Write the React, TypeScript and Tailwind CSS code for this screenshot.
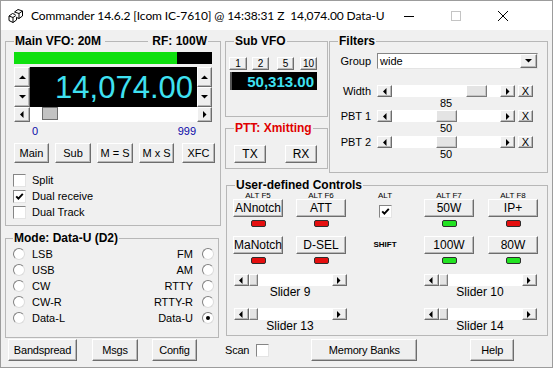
import React from 'react';

type Kids = { children?: React.ReactNode; className?: string };

const raised =
  'bg-[#efefef] border border-t-white border-l-white border-r-[#6d6d6d] border-b-[#6d6d6d] shadow-[inset_-1px_-1px_0_#b8b8b8]';
const sunken = 'bg-white border border-t-[#858585] border-l-[#858585] border-r-[#e4e4e4] border-b-[#e4e4e4]';

function Btn({ children, className = '' }: Kids) {
  return <div className={`${raised} flex items-center justify-center leading-none ${className}`}>{children}</div>;
}

function Tri({ dir }: { dir: 'u' | 'd' | 'l' | 'r' }) {
  const vertical = dir === 'u' || dir === 'd';
  const pts = { u: '0,4 3.5,0.5 7,4', d: '0,0 3.5,3.5 7,0', l: '3.5,0 0,3.5 3.5,7', r: '0,0 3.5,3.5 0,7' }[dir];
  return (
    <svg width={vertical ? 7 : 4} height={vertical ? 4 : 7} viewBox={vertical ? '0 0 7 4' : '0 0 4 7'}>
      <polygon points={pts} fill="#000" />
    </svg>
  );
}

function ArrowBtn({ dir, className = '' }: { dir: 'u' | 'd' | 'l' | 'r'; className?: string }) {
  return (
    <div className={`${raised} flex items-center justify-center shrink-0 ${className}`}>
      <Tri dir={dir} />
    </div>
  );
}

function Scroll({ value, thumb, className = '' }: { value: number; thumb: number; className?: string }) {
  // value 0..1 sets where the thumb sits in the track
  return (
    <div className={`flex h-[12px] ${className}`}>
      <ArrowBtn dir="l" className="w-[15px] h-full" />
      <div className="flex-1 bg-white flex">
        <div style={{ flexGrow: value }} />
        <div
          className="h-full shrink-0 bg-[#e4e4e4] border border-t-white border-l-white border-r-[#7a7a7a] border-b-[#7a7a7a] shadow-[inset_-1px_-1px_0_#c4c4c4]"
          style={{ width: thumb }}
        />
        <div style={{ flexGrow: 1 - value }} />
      </div>
      <ArrowBtn dir="r" className="w-[15px] h-full" />
    </div>
  );
}

function Check({ checked = false, className = '' }: { checked?: boolean; className?: string }) {
  return (
    <div className={`w-[13px] h-[13px] ${sunken} flex items-center justify-center shrink-0 ${className}`}>
      {checked && (
        <svg width="9" height="9" viewBox="0 0 9 9">
          <polyline points="1.2,4.3 3.4,6.6 7.8,1.8" fill="none" stroke="#000" strokeWidth="1.9" />
        </svg>
      )}
    </div>
  );
}

function Radio({ on = false }: { on?: boolean }) {
  return (
    <div className="w-[12px] h-[12px] rounded-full bg-white border border-t-[#808080] border-l-[#808080] border-r-[#dcdcdc] border-b-[#dcdcdc] flex items-center justify-center shrink-0">
      {on && <div className="w-[4px] h-[4px] rounded-full bg-black" />}
    </div>
  );
}

function Led({ on }: { on: boolean }) {
  return (
    <div
      className={`mt-[3px] w-[15px] h-[7px] rounded-[2px] border border-[#2e2e2e] ${on ? 'bg-[#22e322]' : 'bg-[#e50f0f]'}`}
    />
  );
}

function Group({
  title,
  className = '',
  legendClass = '',
  children,
}: {
  title: React.ReactNode;
  className?: string;
  legendClass?: string;
  children?: React.ReactNode;
}) {
  return (
    <fieldset className={`border border-[#b7b7b7] ${className}`}>
      <legend className={`px-[1px] text-[12px] font-bold leading-[14px] ${legendClass}`}>{title}</legend>
      {children}
    </fieldset>
  );
}

function TitleBar() {
  return (
    <div className="h-[29px] bg-white flex items-center shrink-0">
      <svg width="16" height="16" viewBox="0 0 16 16" className="ml-[7px]">
        <g fill="#fff" stroke="#000" strokeWidth="1" strokeLinejoin="round">
          <path d="M1 8 L4.5 5.5 L8.5 7 L8.5 12 L5 14.5 L1 12.5 Z" />
          <path d="M1 8 L5 9.5 L8.5 7 M5 9.5 V14.5" fill="none" />
          <path d="M6.5 4 L10 1.5 L14.5 3 L14.5 8 L11 10.5 L8.5 9.5" />
          <path d="M6.5 4 L11 5.5 L14.5 3 M11 5.5 V10.5" fill="none" />
        </g>
      </svg>
      <span className="ml-[7px] whitespace-pre text-[12px] tracking-[-0.1px] font-['Lato','Liberation_Sans',sans-serif] text-black">
        {'Commander 14.6.2 [Icom IC-7610] @ 14:38:31 Z  14,074.00 Data-U'}
      </span>
      <div className="ml-auto mr-[26px] flex h-full">
        <div className="w-[47px] flex items-center justify-center">
          <svg width="10" height="10" viewBox="0 0 10 10">
            <line x1="0" y1="5.5" x2="10" y2="5.5" stroke="#000" strokeWidth="1" />
          </svg>
        </div>
        <div className="w-[47px] flex items-center justify-center">
          <svg width="10" height="10" viewBox="0 0 10 10">
            <rect x="0.5" y="0.5" width="9" height="9" fill="none" stroke="#c4c4c4" strokeWidth="1" />
          </svg>
        </div>
        <div className="w-[47px] flex items-center justify-center">
          <svg width="10" height="10" viewBox="0 0 10 10">
            <path d="M0 0 L10 10 M10 0 L0 10" stroke="#000" strokeWidth="1" />
          </svg>
        </div>
      </div>
    </div>
  );
}

function MainVfo() {
  return (
    <Group
      className="w-[214px] h-[192px] pl-[8px] pr-[5px]"
      legendClass="flex items-center w-[194px]"
      title={
        <>
          <span className="pr-[4px]">Main VFO: 20M</span>
          <span className="flex-1 h-px bg-[#b7b7b7]" />
          <span className="pl-[4px]">RF: 100W</span>
        </>
      }
    >
      <div className="mt-[4px] h-[12px] w-[198px] bg-black flex">
        <div className="w-[163px] bg-[#0fe00f]" />
      </div>
      <div className="mt-[3px] flex h-[40px] w-[198px]">
        <div className="flex flex-col w-[16px]">
          <ArrowBtn dir="u" className="h-[20px]" />
          <ArrowBtn dir="d" className="h-[20px]" />
        </div>
        <div className="flex-1 bg-black flex items-center justify-end pr-[4px] text-[31px] leading-none text-[#3fe1f1]">
          14,074.00
        </div>
        <div className="flex flex-col w-[15px]">
          <ArrowBtn dir="u" className="h-[20px]" />
          <ArrowBtn dir="d" className="h-[20px]" />
        </div>
      </div>
      <div className="flex h-[15px] w-[198px]">
        <ArrowBtn dir="l" className="w-[16px] h-full" />
        <div className="flex-1 bg-white flex">
          <div className="ml-[12px] w-[16px] h-[13px] bg-[#c3c3c3] border border-[#6f6f6f]" />
        </div>
        <ArrowBtn dir="r" className="w-[15px] h-full" />
      </div>
      <div className="mt-[2px] h-[14px] w-[198px] flex justify-between items-center pl-[18px] pr-[16px] text-[#0a0aa8]">
        <span>0</span>
        <span>999</span>
      </div>
      <div className="mt-[5px] flex h-[20px]">
        <Btn className="w-[35px]">Main</Btn>
        <Btn className="ml-[6px] w-[36px]">Sub</Btn>
        <Btn className="ml-[6px] w-[36px]">M = S</Btn>
        <Btn className="ml-[6px] w-[35px]">M x S</Btn>
        <Btn className="ml-[8px] w-[33px]">XFC</Btn>
      </div>
      <div className="mt-[9px] flex flex-col">
        {[
          ['Split', false],
          ['Dual receive', true],
          ['Dual Track', false],
        ].map(([label, on]) => (
          <div key={label as string} className="h-[16px] flex items-center">
            <Check checked={on as boolean} className="-ml-[1px]" />
            <span className="ml-[6px]">{label as string}</span>
          </div>
        ))}
      </div>
    </Group>
  );
}

function ModeBox() {
  const left = ['LSB', 'USB', 'CW', 'CW-R', 'Data-L'];
  const right = ['FM', 'AM', 'RTTY', 'RTTY-R', 'Data-U'];
  return (
    <Group title="Mode: Data-U (D2)" className="mt-[5px] w-[214px] h-[107px] pl-[7px] pr-[4px]">
      <div className="mt-[1px] grid grid-cols-2">
        {left.map((l, i) => (
          <React.Fragment key={l}>
            <div className="h-[16px] flex items-center">
              <Radio />
              <span className="ml-[7px]">{l}</span>
            </div>
            <div className="h-[16px] flex items-center justify-end">
              <span className="mr-[9px]">{right[i]}</span>
              <Radio on={right[i] === 'Data-U'} />
            </div>
          </React.Fragment>
        ))}
      </div>
    </Group>
  );
}

function SubColumn() {
  return (
    <div className="w-[103px] flex flex-col">
      <Group title="Sub VFO" className="h-[83px] pl-[3px]" legendClass="ml-[5px]">
        <div className="mt-[9px] flex h-[13px] text-[10px]">
          <Btn className="w-[18px]">1</Btn>
          <Btn className="ml-[5px] w-[17px]">2</Btn>
          <Btn className="ml-[8px] w-[17px]">5</Btn>
          <Btn className="ml-[6px] w-[17px]">10</Btn>
        </div>
        <div className="mt-[2px] ml-[1px] w-[87px] h-[18px] bg-black border-l-2 border-[#555] flex items-center justify-end pr-[3px] text-[15px] font-bold leading-none text-[#3fe1f1]">
          50,313.00
        </div>
      </Group>
      <Group
        title="PTT: Xmitting"
        className="mt-[4px] h-[48px] pl-[3px]"
        legendClass="ml-[5px] text-[#e00000]"
      >
        <div className="mt-[10px] flex h-[18px] text-[12px]">
          <Btn className="ml-[5px] w-[32px]">TX</Btn>
          <Btn className="ml-[19px] w-[32px]">RX</Btn>
        </div>
      </Group>
    </div>
  );
}

function FilterRow({ label, value }: { label: string; value: number }) {
  return (
    <>
      <div className="flex h-[12px] items-center">
        <span className="w-[41px] text-right">{label}</span>
        <Scroll value={value / 100} thumb={21} className="ml-[6px] w-[138px]" />
        <Btn className="ml-[3px] w-[15px] h-[12px] text-[11px]">X</Btn>
      </div>
      <div className="h-[13px] flex items-center">
        <span className="ml-[47px] w-[138px] text-center leading-none">{value}</span>
      </div>
    </>
  );
}

function Filters() {
  return (
    <Group title="Filters" className="ml-[1px] w-[219px] h-[139px]" legendClass="ml-[8px]">
      <div className="mt-[5px] flex h-[16px] items-center">
        <span className="w-[41px] text-right">Group</span>
        <div className={`ml-[6px] w-[161px] h-full ${sunken} flex items-center`}>
          <span className="flex-1 pl-[2px]">wide</span>
          <ArrowBtn dir="d" className="w-[17px] h-[14px]" />
        </div>
      </div>
      <div className="mt-[16px] flex flex-col">
        <FilterRow label="Width" value={85} />
        <FilterRow label="PBT 1" value={50} />
        <div className="h-[1px]" />
        <FilterRow label="PBT 2" value={50} />
      </div>
    </Group>
  );
}

function UserControls() {
  const cols = ['w-[62px]', 'w-[64px]', 'w-[64px]', 'w-[64px]', 'w-[64px]'];
  const row1: [string, string, boolean][] = [
    ['ALT F5', 'ANnotch', false],
    ['ALT F6', 'ATT', false],
    ['', '', false],
    ['ALT F7', '50W', true],
    ['ALT F8', 'IP+', false],
  ];
  const row2: [string, boolean][] = [
    ['MaNotch', false],
    ['D-SEL', false],
    ['', false],
    ['100W', true],
    ['80W', true],
  ];
  return (
    <Group
      title="User-defined Controls"
      className="mt-[5px] ml-[1px] w-[322px] h-[158px]"
      legendClass="ml-[8px]"
    >
      <div className="flex">
        {row1.map(([alt, name, on], i) => (
          <div key={i} className={`${cols[i]} flex flex-col items-center`}>
            {i === 2 ? (
              <>
                <span className="h-[7px] text-[8px] leading-[7px]">ALT</span>
                <Check checked className="mt-[6px] w-[12px] h-[12px]" />
              </>
            ) : (
              <>
                <span className="h-[7px] text-[8px] leading-[7px]">{alt}</span>
                <Btn className="w-[50px] h-[18px] text-[12px]">{name}</Btn>
                <Led on={on} />
              </>
            )}
          </div>
        ))}
      </div>
      <div className="mt-[9px] flex">
        {row2.map(([name, on], i) => (
          <div key={i} className={`${cols[i]} flex flex-col items-center`}>
            {i === 2 ? (
              <span className="h-[18px] flex items-center text-[8px] font-bold">SHIFT</span>
            ) : (
              <>
                <Btn className="w-[50px] h-[18px] text-[12px]">{name}</Btn>
                <Led on={on} />
              </>
            )}
          </div>
        ))}
      </div>
      {[
        ['Slider 9', 'Slider 10'],
        ['Slider 13', 'Slider 14'],
      ].map(([a, b], r) => (
        <div key={a} className={`flex ${r === 0 ? 'mt-[10px]' : 'mt-[9px]'}`}>
          {[a, b].map((s, j) => (
            <div key={s} className={`w-[126px] flex flex-col items-center ${j === 1 ? 'ml-[64px]' : ''}`}>
              <Scroll value={0} thumb={9} className="w-[113px]" />
              <span className="h-[13px] text-[12px] leading-[13px]">{s}</span>
            </div>
          ))}
        </div>
      ))}
    </Group>
  );
}

function BottomBar() {
  return (
    <div className="mt-[1px] pl-[7px] flex h-[22px] items-center tracking-[-0.2px]">
      <Btn className="w-[69px] h-full">Bandspread</Btn>
      <Btn className="ml-[15px] w-[46px] h-full">Msgs</Btn>
      <Btn className="ml-[14px] w-[45px] h-full">Config</Btn>
      <span className="ml-[28px]">Scan</span>
      <Check className="ml-[7px] w-[12px] h-[12px]" />
      <Btn className="ml-[42px] w-[106px] h-full">Memory Banks</Btn>
      <Btn className="ml-[53px] w-[44px] h-full">Help</Btn>
    </div>
  );
}

export default function App() {
  return (
    <div className="w-[553px] h-[368px] overflow-hidden border border-[#9c9c9c] bg-[#f0f0f0] font-['Liberation_Sans',Arial,sans-serif] text-[11px] text-black flex flex-col">
      <TitleBar />
      <div className="flex pl-[4px] pt-[4px] h-[308px] shrink-0">
        <div className="w-[214px] flex flex-col">
          <MainVfo />
          <ModeBox />
        </div>
        <div className="ml-[6px] w-[323px] flex flex-col">
          <div className="flex">
            <SubColumn />
            <Filters />
          </div>
          <UserControls />
        </div>
      </div>
      <BottomBar />
    </div>
  );
}
